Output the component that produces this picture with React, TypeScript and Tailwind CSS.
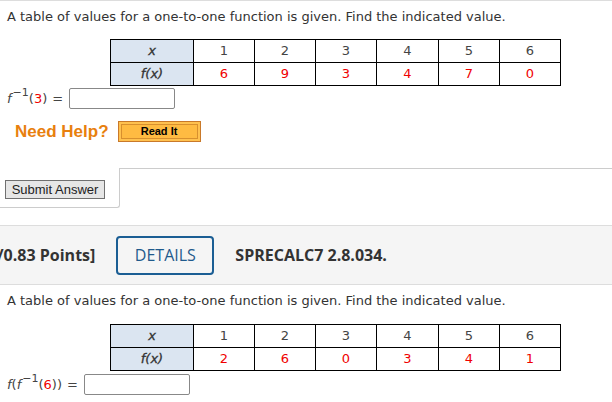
import React from "react";

const R = ({ children }: { children: React.ReactNode }) => (
  <span className="text-[#f00000]">{children}</span>
);

function ValueTable({ xs, fs }: { xs: string[]; fs: string[] }) {
  const widths = ["w-[61px]", "w-[61px]", "w-[61px]", "w-[62px]", "w-[61px]", "w-[61px]"];
  return (
    <table className="ml-[110px] border-collapse border border-black text-[13px] text-[#444]">
      <tbody>
        <tr className="h-[23px]">
          <td className="w-[83px] border border-black bg-[#dbe5f1] text-center italic text-[#333] p-0 [-webkit-text-stroke:0.3px_#333]">x</td>
          {xs.map((v, i) => (
            <td key={i} className={`${widths[i]} border border-black text-center p-0`}>{v}</td>
          ))}
        </tr>
        <tr className="h-[23px]">
          <td className="border border-black bg-[#dbe5f1] text-center italic text-[#333] p-0 [-webkit-text-stroke:0.3px_#333]">f(x)</td>
          {fs.map((v, i) => (
            <td key={i} className="border border-black text-center text-[#f00000] p-0">{v}</td>
          ))}
        </tr>
      </tbody>
    </table>
  );
}

export default function App() {
  return (
    <div
      className="w-[612px] h-[402px] overflow-hidden bg-white border-t border-[#dddddd] text-[#333]"
      style={{ fontFamily: '"DejaVu Sans", Verdana, sans-serif' }}
    >
      <p className="pl-[7px] pt-[8px] h-[38px] text-[13px] leading-[16px]">
        A table of values for a one-to-one function is given. Find the indicated value.
      </p>
      <ValueTable xs={["1", "2", "3", "4", "5", "6"]} fs={["6", "9", "3", "4", "7", "0"]} />
      <div className="flex items-center h-[21px] mt-[2px] pl-[7px] text-[13px] text-[#444]">
        <span className="italic">f</span>
        <span className="text-[11px] relative -top-[5px] ml-[1px]">−1</span>
        <span>(</span>
        <R>3</R>
        <span>)</span>
        <span className="ml-[5px] mr-[6px]">=</span>
        <span className="w-[106px] h-[21px] border border-[#888] rounded-[2px] bg-white" />
      </div>
      <div className="flex items-center h-[21px] mt-[12px] pl-[15px]" style={{ fontFamily: '"Liberation Sans", Arial, sans-serif' }}>
        <span className="text-[17px] font-bold text-[#e8800e]">Need Help?</span>
        <span className="ml-[9px] w-[83px] h-[21px] border border-[#c9792a] bg-[#ffc14f] p-[2px] flex">
          <span className="flex-1 border border-[#d8902e] bg-[#ffbb42] flex items-center justify-center text-[11px] font-bold text-black leading-none">
            Read It
          </span>
        </span>
      </div>
      <div className="flex mt-[26px] h-[40px]" style={{ fontFamily: '"Liberation Sans", Arial, sans-serif' }}>
        <div className="w-[120px] h-[40px] border-r border-b border-[#cccccc] rounded-br-[3px] flex items-center pl-[5px] pt-[3px]">
          <span className="w-[100px] h-[19px] border border-[#707070] bg-[#e6e6e6] text-[13px] text-[#222] flex items-center justify-center leading-none">
            Submit Answer
          </span>
        </div>
        <div className="flex-1 border-t border-[#cccccc]" />
      </div>
      <div
        className="mt-[17px] h-[60px] bg-[#f5f5f5] border-t border-b border-[#dddddd] flex items-center"
        style={{ fontFamily: '"Open Sans", sans-serif' }}
      >
        <span className="ml-[-3px] text-[16px] font-bold text-[#333]">/0.83 Points]</span>
        <span className="ml-[21px] w-[98px] h-[39px] border-2 border-[#1b5e94] rounded-[4px] flex items-center justify-center text-[16px] text-[#1f5a8c]">
          DETAILS
        </span>
        <span className="ml-[21px] text-[16px] font-bold text-[#333]">SPRECALC7 2.8.034.</span>
      </div>
      <p className="pl-[7px] pt-[8px] h-[39px] text-[13px] leading-[16px]">
        A table of values for a one-to-one function is given. Find the indicated value.
      </p>
      <ValueTable xs={["1", "2", "3", "4", "5", "6"]} fs={["2", "6", "0", "3", "4", "1"]} />
      <div className="flex items-center h-[21px] mt-[3px] pl-[7px] text-[13px] text-[#444]">
        <span className="italic">f</span>
        <span>(</span>
        <span className="italic">f</span>
        <span className="text-[11px] relative -top-[5px] ml-[1px]">−1</span>
        <span>(</span>
        <R>6</R>
        <span>))</span>
        <span className="ml-[5px] mr-[6px]">=</span>
        <span className="w-[106px] h-[21px] border border-[#888] rounded-[2px] bg-white" />
      </div>
    </div>
  );
}
